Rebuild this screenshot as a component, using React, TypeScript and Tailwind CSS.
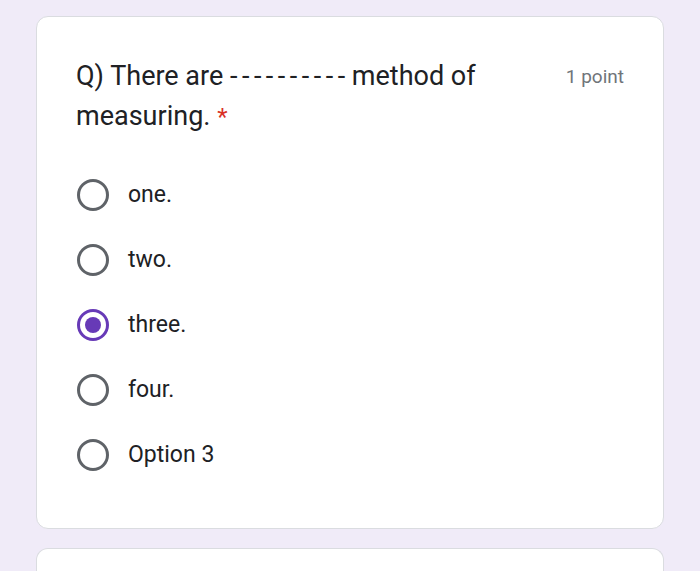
const options = ['one.', 'two.', 'three.', 'four.', 'Option 3'];

function Radio({ checked }: { checked: boolean }) {
  return (
    <div
      className={`flex h-[32px] w-[32px] shrink-0 items-center justify-center rounded-full border-[3px] ${
        checked ? 'border-[#673ab7]' : 'border-[#5f6368]'
      }`}
    >
      {checked && <div className="h-[16px] w-[16px] rounded-full bg-[#673ab7]" />}
    </div>
  );
}

export default function App() {
  const selected = 'three.';

  return (
    <div
      className="h-[571px] overflow-hidden bg-[#f0ebf8] px-[36px] pt-[16px]"
      style={{ fontFamily: 'Roboto, "Noto Sans", sans-serif' }}
    >
      {/* Question card */}
      <div className="rounded-[12px] border border-[#dadce0] bg-white px-[39px] pt-[39px] pb-[41px]">
        <div className="flex items-start justify-between gap-6">
          <div className="max-w-[460px] text-[27px] leading-[40px] text-[#202124]">
            Q) There are <span className="tracking-[4.5px]">---------</span>- method of measuring.{' '}
            <span className="text-[24px] text-[#d93025]">*</span>
          </div>
          <div className="whitespace-nowrap pt-[9px] text-[19px] leading-[24px] text-[#70757a]">1 point</div>
        </div>

        <div className="mt-[25px] flex flex-col">
          {options.map((opt) => (
            <div key={opt} className="flex h-[65px] items-center gap-[19px] pl-[1px]">
              <Radio checked={opt === selected} />
              <span className="pt-[2px] text-[23px] text-[#202124]">{opt}</span>
            </div>
          ))}
        </div>
      </div>

      {/* Next card peeking */}
      <div className="mt-[19px] h-[40px] rounded-t-[12px] border border-b-0 border-[#dadce0] bg-white" />
    </div>
  );
}
